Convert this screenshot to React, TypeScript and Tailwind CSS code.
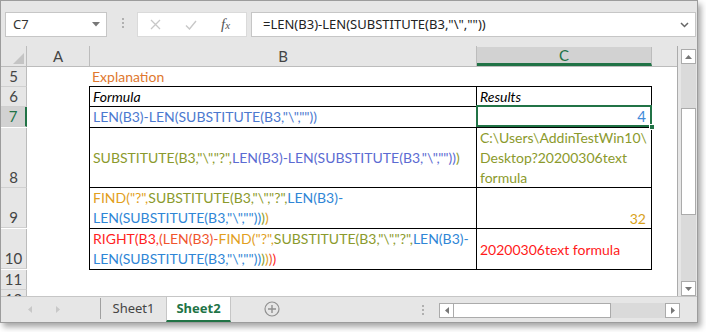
import React from 'react'

type Seg = { t: string; c: string }

const ui = "font-['Noto_Sans',sans-serif]"
const cell = "font-['Lato',sans-serif] text-[14px]"

// formula pieces, coloured the way Excel colours the nesting levels
const row7: Seg[] = [{ t: 'LEN(B3)-LEN(SUBSTITUTE(B3,"\\",""))', c: 'text-[#4c79cf]' }]

const row8: Seg[] = [
  { t: 'SUBSTITUTE(B3,"\\","?",', c: 'text-[#8b9a2c]' },
  { t: 'LEN(B3)-LEN(SUBSTITUTE(B3,"\\",""))', c: 'text-[#5b6bd2]' },
  { t: ')', c: 'text-[#8b9a2c]' },
]

const row9a: Seg[] = [
  { t: 'FIND("?",', c: 'text-[#e2a01c]' },
  { t: 'SUBSTITUTE(B3,"\\","?",', c: 'text-[#8b9a2c]' },
  { t: 'LEN(B3)-', c: 'text-[#2f86d6]' },
]
const row9b: Seg[] = [
  { t: 'LEN(SUBSTITUTE(B3,"\\",""))', c: 'text-[#2f86d6]' },
  { t: ')', c: 'text-[#8b9a2c]' },
  { t: ')', c: 'text-[#e2a01c]' },
]

const row10a: Seg[] = [
  { t: 'RIGHT(B3,', c: 'text-[#ff1f1f]' },
  { t: '(LEN(B3)-', c: 'text-[#f0552e]' },
  { t: 'FIND("?",', c: 'text-[#e2a01c]' },
  { t: 'SUBSTITUTE(B3,"\\","?",', c: 'text-[#8b9a2c]' },
  { t: 'LEN(B3)-', c: 'text-[#2f86d6]' },
]
const row10b: Seg[] = [
  { t: 'LEN(SUBSTITUTE(B3,"\\",""))', c: 'text-[#2f86d6]' },
  { t: ')', c: 'text-[#8b9a2c]' },
  { t: ')', c: 'text-[#e2a01c]' },
  { t: ')', c: 'text-[#f0552e]' },
  { t: ')', c: 'text-[#ff1f1f]' },
]

function Line({ segs }: { segs: Seg[] }) {
  return (
    <div className="h-[20px] leading-[20px] whitespace-nowrap">
      {segs.map((s, i) => (
        <span key={i} className={s.c}>{s.t}</span>
      ))}
    </div>
  )
}

function RowHead({ n, h, active }: { n: string; h: string; active?: boolean }) {
  return (
    <div
      className={`${h} w-[26px] shrink-0 flex items-end justify-center pb-[1px] border-b border-[#d0d0d0] ${
        active ? 'bg-[#d2d2d2] text-[#217346] border-r-2 border-r-[#217346]' : 'bg-[#e6e6e6] text-[#444] border-r border-r-[#bcbcbc]'
      } ${cell} text-[15px] leading-[18px]`}
    >
      {n}
    </div>
  )
}

function Dots({ className }: { className: string }) {
  return (
    <div className={`flex flex-col gap-[2px] ${className}`}>
      <span className="w-[2px] h-[2px] bg-[#b0b0b0]" />
      <span className="w-[2px] h-[2px] bg-[#b0b0b0]" />
      <span className="w-[2px] h-[2px] bg-[#b0b0b0]" />
    </div>
  )
}

export default function App() {
  return (
    <div className="w-[706px] h-[332px] bg-white overflow-hidden">
      <div className="w-[698px] h-[323px] bg-[#e6e6e6] border border-[#9c9c9c] shadow-[3px_4px_6px_rgba(0,0,0,0.35)] flex flex-col">
        {/* formula bar */}
        <div className="h-[45px] shrink-0 flex items-start pt-[11px]">
          <div className={`ml-[4px] w-[102px] h-[25px] bg-white border border-[#c6c6c6] flex items-center justify-between pl-[7px] pr-[6px] ${ui} text-[13px] text-[#333]`}>
            <span>C7</span>
            <svg width="8" height="5" viewBox="0 0 8 5"><path d="M0 0h8L4 4.5z" fill="#777" /></svg>
          </div>
          <Dots className="ml-[15px] mt-[6px]" />
          <div className="ml-[13px] w-[110px] h-[25px] bg-white border border-[#dadada] flex items-center">
            <svg className="ml-[12px]" width="11" height="11" viewBox="0 0 11 11">
              <path d="M1 1l9 9M10 1l-9 9" stroke="#c8c8c8" strokeWidth="1.3" />
            </svg>
            <svg className="ml-[24px]" width="12" height="10" viewBox="0 0 12 10">
              <path d="M1 5.5l3.5 3.5L11 1" stroke="#c8c8c8" strokeWidth="1.4" fill="none" />
            </svg>
            <span className="ml-[24px] font-['Liberation_Serif',serif] italic text-[15px] text-[#555] leading-none">
              f<span className="text-[11px]">x</span>
            </span>
          </div>
          <div className={`ml-[4px] w-[445px] h-[25px] bg-white border border-[#c6c6c6] flex items-center justify-between pl-[11px] pr-[6px] ${ui} text-[13px] text-[#222]`}>
            <span className="whitespace-nowrap">=LEN(B3)-LEN(SUBSTITUTE(B3,"\",""))</span>
            <svg width="9" height="6" viewBox="0 0 9 6"><path d="M1 1l3.5 3.5L8 1" stroke="#666" strokeWidth="1.5" fill="none" /></svg>
          </div>
        </div>

        {/* sheet + vertical scroll */}
        <div className="h-[250px] shrink-0 flex">
          <div className="w-[677px] shrink-0 overflow-hidden border-r border-[#ababab] bg-white">
            {/* column headers */}
            <div className={`h-[21px] flex bg-[#e6e6e6] border-b border-[#bcbcbc] ${cell} text-[15px] text-[#444]`}>
              <div className="w-[26px] shrink-0 border-r border-[#bcbcbc] relative">
                <svg className="absolute right-[2px] bottom-[2px]" width="11" height="11" viewBox="0 0 11 11">
                  <path d="M11 0v11H0z" fill="#c4c4c4" />
                </svg>
              </div>
              <div className="w-[63px] shrink-0 border-r border-[#bcbcbc] flex items-center justify-center">A</div>
              <div className="w-[387px] shrink-0 border-r border-[#bcbcbc] flex items-center justify-center">B</div>
              <div className="w-[175px] shrink-0 mt-[1px] border-r border-[#bcbcbc] bg-[#d2d2d2] border-b-[3px] border-b-[#217346] text-[#217346] flex items-center justify-center">C</div>
              <div className="flex-1" />
            </div>

            {/* row 5 */}
            <div className={`flex ${cell}`}>
              <RowHead n="5" h="h-[20px]" />
              <div className="w-[62px] shrink-0" />
              <div className="w-[387px] shrink-0 border-b border-black pl-[3px] leading-[19px] text-[#e0782f]">Explanation</div>
              <div className="w-[176px] shrink-0 border-b border-black" />
            </div>
            {/* row 6 */}
            <div className={`flex ${cell}`}>
              <RowHead n="6" h="h-[20px]" />
              <div className="w-[62px] shrink-0" />
              <div className="w-[387px] shrink-0 border-l border-b border-black pl-[3px] leading-[19px] italic text-black">Formula</div>
              <div className="w-[176px] shrink-0 border-l border-r border-b border-black pl-[3px] leading-[19px] italic text-black">Results</div>
            </div>
            {/* row 7 */}
            <div className={`flex ${cell}`}>
              <RowHead n="7" h="h-[20px]" active />
              <div className="w-[62px] shrink-0" />
              <div className="w-[387px] shrink-0 border-l border-b border-black pl-[3px] leading-[19px]">
                <Line segs={row7} />
              </div>
              <div className="w-[176px] shrink-0 border-l border-r border-b border-black relative">
                <div className="text-right pr-[5px] leading-[19px] text-[#3f8ad9] text-[15px]">4</div>
                <div className="absolute -left-[1px] -top-[2px] w-[176px] h-[22px] border-2 border-[#217346]" />
                <div className="absolute -right-[4px] -bottom-[3px] w-[6px] h-[6px] bg-[#217346] border border-white" />
              </div>
            </div>
            {/* row 8 */}
            <div className={`flex ${cell}`}>
              <RowHead n="8" h="h-[60px]" />
              <div className="w-[62px] shrink-0" />
              <div className="w-[387px] shrink-0 border-l border-b border-black pl-[3px] flex items-center">
                <Line segs={row8} />
              </div>
              <div className="w-[176px] shrink-0 border-l border-r border-b border-black pl-[3px] text-[#8b9a2c] pt-[0px]">
                <div className="h-[20px] leading-[19px]">C:\Users\AddinTestWin10\</div>
                <div className="h-[20px] leading-[19px]">Desktop?20200306text</div>
                <div className="h-[19px] leading-[19px]">formula</div>
              </div>
            </div>
            {/* row 9 */}
            <div className={`flex ${cell}`}>
              <RowHead n="9" h="h-[40px]" />
              <div className="w-[62px] shrink-0" />
              <div className="w-[387px] shrink-0 border-l border-b border-black pl-[3px] leading-[19px]">
                <Line segs={row9a} />
                <Line segs={row9b} />
              </div>
              <div className="w-[176px] shrink-0 border-l border-r border-b border-black flex items-end justify-end pr-[5px] text-[#d9a21b] leading-[19px]">
                32
              </div>
            </div>
            {/* row 10 */}
            <div className={`flex ${cell}`}>
              <RowHead n="10" h="h-[40px]" />
              <div className="w-[62px] shrink-0" />
              <div className="w-[387px] shrink-0 border-l border-b border-black pl-[3px] leading-[19px]">
                <Line segs={row10a} />
                <Line segs={row10b} />
              </div>
              <div className="w-[176px] shrink-0 border-l border-r border-b border-black pl-[3px] flex items-center text-[#ff1a1a]">
                20200306text formula
              </div>
            </div>
            <div className={`flex ${cell}`}>
              <RowHead n="11" h="h-[20px]" />
            </div>
            <div className={`flex ${cell}`}>
              <RowHead n="12" h="h-[20px]" />
            </div>
          </div>

          {/* vertical scrollbar */}
          <div className="flex-1 flex flex-col items-end pr-[1px] pt-[3px] pb-[0px]">
            <div className="w-[15px] h-[15px] bg-white border border-[#ababab] flex items-center justify-center">
              <svg width="7" height="4" viewBox="0 0 7 4"><path d="M0 4h7L3.5 0z" fill="#777" /></svg>
            </div>
            <div className="w-[15px] flex-1 bg-[#dadada] flex flex-col pt-[44px] pb-[66px]">
              <div className="flex-1 bg-white border border-[#ababab]" />
            </div>
            <div className="w-[15px] h-[15px] bg-white border border-[#ababab] flex items-center justify-center">
              <svg width="7" height="4" viewBox="0 0 7 4"><path d="M0 0h7L3.5 4z" fill="#777" /></svg>
            </div>
          </div>
        </div>

        {/* sheet tabs */}
        <div className={`flex-1 flex border-t border-[#c6c6c6] ${ui}`}>
          <div className="w-[99px] shrink-0 flex items-center">
            <svg className="ml-[27px]" width="4" height="7" viewBox="0 0 4 7"><path d="M4 0v7L0 3.5z" fill="#c8c8c8" /></svg>
            <svg className="ml-[24px]" width="4" height="7" viewBox="0 0 4 7"><path d="M0 0v7l4-3.5z" fill="#c8c8c8" /></svg>
          </div>
          <div className="w-[66px] shrink-0 border-l border-[#a0a0a0] my-[1px] mb-[3px] flex items-center justify-center text-[13px] text-[#444]">
            Sheet1
          </div>
          <div className="w-[65px] shrink-0 bg-white border-l border-r border-[#c6c6c6] border-b-2 border-b-[#217346] flex items-center justify-center text-[13px] font-bold text-[#217346]">
            Sheet2
          </div>
          <div className="w-[33px] shrink-0" />
          <svg className="mt-[4px]" width="16" height="16" viewBox="0 0 16 16">
            <circle cx="8" cy="8" r="7" fill="none" stroke="#909090" strokeWidth="1.2" />
            <path d="M8 4v8M4 8h8" stroke="#909090" strokeWidth="1.4" />
          </svg>
          <div className="w-[142px] shrink-0" />
          <Dots className="mt-[8px]" />
          <div className="ml-[15px] mt-[6px] w-[241px] h-[15px] flex">
            <div className="w-[15px] h-[15px] bg-white border border-[#ababab] flex items-center justify-center">
              <svg width="4" height="7" viewBox="0 0 4 7"><path d="M4 0v7L0 3.5z" fill="#777" /></svg>
            </div>
            <div className="w-[157px] h-[15px] bg-white border-y border-r border-[#ababab]" />
            <div className="flex-1 bg-[#dadada]" />
            <div className="w-[15px] h-[15px] bg-white border border-[#ababab] flex items-center justify-center">
              <svg width="4" height="7" viewBox="0 0 4 7"><path d="M0 0v7l4-3.5z" fill="#777" /></svg>
            </div>
          </div>
        </div>
      </div>
    </div>
  )
}
